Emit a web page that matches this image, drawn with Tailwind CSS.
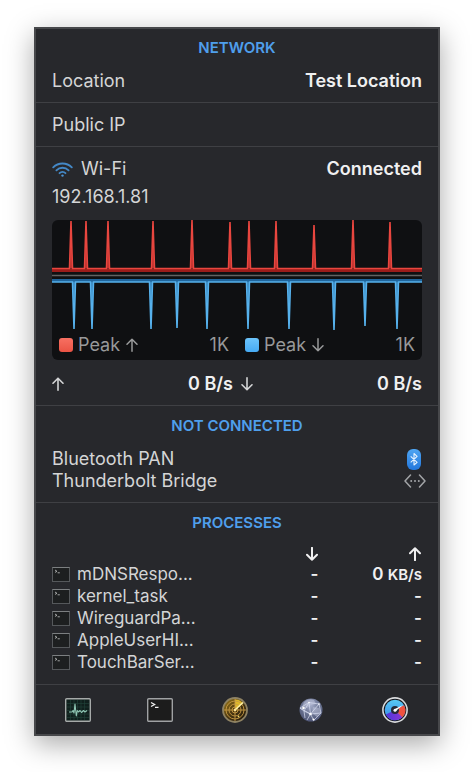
<!DOCTYPE html>
<html lang="en">
<head>
  <meta charset="UTF-8" />
  <meta name="viewport" content="width=device-width, initial-scale=1" />
  <title>Network</title>
  <script src="https://cdn.jsdelivr.net/npm/@tailwindcss/browser@4"></script>
</head>
<body class="bg-white pl-[34px] pr-[34px] pt-[27px] pb-9 font-['Inter',sans-serif] text-lg leading-[22px] text-[#d4d5d6]">

  <!-- Shared icons -->
  <svg class="hidden">
    <symbol id="up" viewBox="0 0 12 14"><path d="M6 13.2V1.2M1 6.2l5-5 5 5" fill="none" stroke="currentColor" stroke-linecap="round" stroke-linejoin="round" /></symbol>
    <symbol id="down" viewBox="0 0 12 14"><path d="M6 .8v12M1 7.8l5 5 5-5" fill="none" stroke="currentColor" stroke-linecap="round" stroke-linejoin="round" /></symbol>
    <symbol id="term" viewBox="0 0 18 15">
      <rect x=".5" y=".5" width="17" height="14" fill="#1d1f20" stroke="#55585b" />
      <path d="M.5 .5h17" stroke="#7c7f81" />
      <path d="M3 3l2 1.3L3 5.400M5.600 5.800h2.200" fill="none" stroke="#b4b6b6" stroke-width=".9" />
    </symbol>
  </svg>

  <main class="mx-auto max-w-xl border-2 border-[#47484b] bg-[#27282c] shadow-[0_8px_26px_rgba(0,0,0,0.34)]">

    <!-- Network -->
    <section class="border-b border-[#3f4044] px-4 pt-[9px] pb-2.5">
      <h2 class="text-center text-[15px] leading-5 font-semibold text-[#4f9fec]">NETWORK</h2>
      <div class="mt-3 flex justify-between">
        <span>Location</span>
        <span class="font-semibold text-[#f0f0f1]">Test Location</span>
      </div>
    </section>

    <section class="border-b border-[#3f4044] px-4 pt-[11px] pb-2.5">
      <p>Public IP</p>
    </section>

    <!-- Wi-Fi -->
    <section class="border-b border-[#3f4044] px-4 pt-[11px] pb-2.5">
      <div class="flex items-center justify-between">
        <span class="flex items-center gap-2">
          <svg class="h-[15px] w-[21px]" viewBox="0 0 21 15" fill="none" stroke="#4488c6" stroke-width="1.800" stroke-linecap="round">
            <path d="M1.200 5.400a13 13 0 0 1 18.600 0" />
            <path d="M4.400 8.300a8.600 8.600 0 0 1 12.200 0" />
            <path d="M7.500 11.200a4.200 4.200 0 0 1 6 0" />
            <circle cx="10.500" cy="13.600" r="1.200" fill="#4b93d4" stroke="none" />
          </svg>
          Wi-Fi
        </span>
        <span class="font-semibold text-[#f0f0f1]">Connected</span>
      </div>
      <p class="mt-1.5">192.168.1.81</p>

      <!-- Traffic graph -->
      <div class="mt-3 h-[140px] overflow-hidden rounded-md bg-[#0f1012] text-[#98999a]">
        <svg class="block h-[112px] w-full" viewBox="0 0 370 112" preserveAspectRatio="none" fill="none">
          <path d="M0 50.500H370" stroke="#9c1c1a" stroke-width="3" />
          <path d="M0 48.500H17.500L19 1L20.500 48.500H32.500L34 1L35.500 48.500H54.500L56 1L57.500 48.500H99.500L101 1L102.500 48.500H138.500L140 0L141.500 48.500H176.500L178 2L179.500 48.500H195.500L197 1L198.500 48.500H222.500L224 1L225.500 48.500H260.500L262 5L263.500 48.500H299.500L301 0L302.500 48.500H336.500L338 2L339.500 48.500H370" fill="#b02c2a" stroke="#e8463f" stroke-width="1.600" />
          <path d="M0 55.500H370" stroke="#626262" stroke-width="1.500" />
          <path d="M0 60.500H370" stroke="#20659c" stroke-width="3" />
          <path d="M0 62H20.500L22 109L23.500 62H38.500L40 109L41.500 62H97.500L99 109L100.500 62H123.500L125 108L126.500 62H153.500L155 109L156.500 62H194.500L196 109L197.500 62H235.500L237 109L238.500 62H280.500L282 110L283.500 62H311.500L313 106L314.500 62H343.500L345 109L346.500 62H370" fill="#337fb4" stroke="#56b1ec" stroke-width="1.600" />
        </svg>
        <div class="grid grid-cols-2 gap-4 px-[7px] pt-0.5">
          <div class="flex items-center">
            <span class="size-3.5 rounded-[3px] bg-linear-to-b from-[#f77062] to-[#ea5344]"></span>
            <span class="ml-[5px]">Peak</span>
            <svg class="ml-1.5 h-3.5 w-3 stroke-[1.5]"><use href="#up" /></svg>
            <span class="ml-auto">1K</span>
          </div>
          <div class="flex items-center">
            <span class="size-3.5 rounded-[3px] bg-linear-to-b from-[#6cc4fb] to-[#46aaf3]"></span>
            <span class="ml-[5px]">Peak</span>
            <svg class="ml-1.5 h-3.5 w-3 stroke-[1.5]"><use href="#down" /></svg>
            <span class="ml-auto">1K</span>
          </div>
        </div>
      </div>

      <div class="mt-[13px] grid grid-cols-2 gap-2">
        <div class="flex items-center justify-between">
          <svg class="h-3.5 w-3 stroke-[1.6]"><use href="#up" /></svg>
          <span class="font-semibold text-[#f0f0f1]">0 B/s</span>
        </div>
        <div class="flex items-center justify-between">
          <svg class="h-3.5 w-3 stroke-[1.6]"><use href="#down" /></svg>
          <span class="font-semibold text-[#f0f0f1]">0 B/s</span>
        </div>
      </div>
    </section>

    <!-- Not connected -->
    <section class="border-b border-[#3f4044] px-4 py-2.5">
      <h2 class="text-center text-[15px] leading-5 font-semibold text-[#4f9fec]">NOT CONNECTED</h2>
      <div class="mt-3 flex items-center justify-between">
        <span>Bluetooth PAN</span>
        <svg class="mr-px h-[21px] w-3.5" viewBox="0 0 14 21">
          <defs><linearGradient id="bt" x2="0" y2="1"><stop stop-color="#4fa5f2" /><stop offset="1" stop-color="#2277dc" /></linearGradient></defs>
          <rect width="14" height="21" rx="6" fill="url(#bt)" />
          <path d="M3.700 7.300l6.400 6L7 16V4.500l3.100 2.900-6.400 6" fill="none" stroke="#e6f2ff" stroke-width="1.100" stroke-linejoin="round" />
        </svg>
      </div>
      <div class="flex items-center justify-between">
        <span>Thunderbolt Bridge</span>
        <svg class="-mr-1 h-3.5 w-[22px]" viewBox="0 0 22 14" fill="none" stroke="#a2a4a7" stroke-width="1.500" stroke-linecap="round" stroke-linejoin="round">
          <path d="M6.500 1L1 7l5.500 6M15.500 1L21 7l-5.500 6" />
          <path d="M7.200 7h.01M11 7h.01M14.800 7h.01" stroke-width="2" />
        </svg>
      </div>
    </section>

    <!-- Processes -->
    <section class="border-b border-[#3f4044] px-4 pt-2.5 pb-[11px]">
      <h2 class="text-center text-[15px] leading-5 font-semibold text-[#4f9fec]">PROCESSES</h2>
      <table class="mt-3 w-full table-fixed text-right text-[17px] leading-[22px]">
        <colgroup>
          <col />
          <col class="w-[28%]" />
          <col class="w-[28%]" />
        </colgroup>
        <thead class="text-[#f0f0f1]">
          <tr class="h-[18px] leading-none">
            <th aria-label="Process"></th>
            <th aria-label="Download" class="p-0"><svg class="ml-auto h-3.5 w-3 stroke-2"><use href="#down" /></svg></th>
            <th aria-label="Upload" class="p-0"><svg class="mr-px ml-auto h-3.5 w-3 stroke-2"><use href="#up" /></svg></th>
          </tr>
        </thead>
        <tbody class="font-semibold text-[#f0f0f1]">
          <tr>
            <td class="flex items-center gap-[7px] font-normal text-[#d4d5d6]"><svg class="h-[15px] w-[18px]"><use href="#term" /></svg>mDNSRespo...</td>
            <td>-</td>
            <td>0 <span class="text-[15px] leading-none">KB/s</span></td>
          </tr>
          <tr>
            <td class="flex items-center gap-[7px] font-normal text-[#d4d5d6]"><svg class="h-[15px] w-[18px]"><use href="#term" /></svg>kernel_task</td>
            <td>-</td>
            <td>-</td>
          </tr>
          <tr>
            <td class="flex items-center gap-[7px] font-normal text-[#d4d5d6]"><svg class="h-[15px] w-[18px]"><use href="#term" /></svg>WireguardPa...</td>
            <td>-</td>
            <td>-</td>
          </tr>
          <tr>
            <td class="flex items-center gap-[7px] font-normal text-[#d4d5d6]"><svg class="h-[15px] w-[18px]"><use href="#term" /></svg>AppleUserHI...</td>
            <td>-</td>
            <td>-</td>
          </tr>
          <tr>
            <td class="flex items-center gap-[7px] font-normal text-[#d4d5d6]"><svg class="h-[15px] w-[18px]"><use href="#term" /></svg>TouchBarSer...</td>
            <td>-</td>
            <td>-</td>
          </tr>
        </tbody>
      </table>
    </section>

    <!-- App shortcuts -->
    <footer class="grid h-[49px] grid-cols-[84fr_80fr_70fr_82fr_86fr] place-items-center">
      <button aria-label="Activity Monitor">
        <svg class="block h-6 w-[26px]" viewBox="0 0 26 24">
          <rect x=".7" y=".7" width="24.600" height="22.600" rx="1" fill="#10201d" stroke="#a6aaa9" stroke-width="1.400" />
          <path d="M2 5.500h22M2 9h22M2 12.500h22M2 16h22M2 19.500h22M5.500 2v20M9 2v20M12.500 2v20M16 2v20M19.500 2v20" stroke="#21433a" stroke-width=".6" />
          <path d="M4 14h3l1-1.500 1 2.500 1-9 1.300 12 1-5.500 1.200 1.500 1.500-1.500 1.500 2 2-2 1.500 1.500L22 12.500" fill="none" stroke="#8fc7b4" stroke-width="1.100" stroke-linejoin="round" />
        </svg>
      </button>
      <button aria-label="Terminal">
        <svg class="block h-6 w-[26px]" viewBox="0 0 26 24">
          <rect x=".7" y=".7" width="24.600" height="22.600" rx="1" fill="#1c1c1c" stroke="#a0a2a4" stroke-width="1.400" />
          <path d="M4 4.500l3.600 2L4 8.500M8 9.300h3.500" fill="none" stroke="#f2f2f2" stroke-width="1.300" />
        </svg>
      </button>
      <button aria-label="Network Radar">
        <svg class="block size-[26px]" viewBox="0 0 26 26">
          <defs><linearGradient id="radar" x1="0" y1="0" x2="1" y2="1"><stop stop-color="#a58119" /><stop offset=".5" stop-color="#4b3711" /><stop offset="1" stop-color="#17120a" /></linearGradient></defs>
          <circle cx="13" cy="13" r="12" fill="url(#radar)" stroke="#8e8263" stroke-width="1.800" />
          <path d="M13 13V2.500a10.500 10.500 0 0 1 7.800 3.400z" fill="#dfb928" />
          <g fill="none" stroke="#c79b45" stroke-width=".9">
            <circle cx="13" cy="13" r="3" /><circle cx="13" cy="13" r="6" /><circle cx="13" cy="13" r="9" />
            <path d="M13 2v22M2 13h22" />
          </g>
          <path d="M13 13l8-7.500" stroke="#fff3a8" stroke-width="1.600" />
          <circle cx="13" cy="13" r="1.200" fill="#ffe89a" />
          <circle cx="16.500" cy="19.500" r=".9" fill="#f3d567" />
        </svg>
      </button>
      <button aria-label="Network Utility">
        <svg class="block size-6" viewBox="0 0 24 24">
          <defs><radialGradient id="globe" cx=".5" cy=".3" r=".75"><stop stop-color="#a4acc9" /><stop offset=".55" stop-color="#68718f" /><stop offset="1" stop-color="#4b5273" /></radialGradient></defs>
          <circle cx="12" cy="12" r="11.500" fill="url(#globe)" />
          <path d="M5 4q4-4 10-2l2 4-5 1-4 3-5-1zM14 9l6 1 2 4-4 5-5-4z" fill="#c7cce2" opacity=".45" />
          <path d="M1 10L10 4.500 20 6M1 10l10.500 6L22 15M10 4.500l1.500 11.500L8 22M10 4.500L5 13M11.500 16L20 6M5 13l6.500 3 3.500 7M1 10l4 3 1 7M20 6l2 9-7 7" fill="none" stroke="#d9def2" stroke-width=".7" />
          <g fill="#fff"><circle cx="4.500" cy="10" r="1.300" /><circle cx="11.500" cy="16" r="1.300" /><circle cx="10" cy="4.500" r=".8" /><circle cx="20" cy="6" r=".8" /><circle cx="14.500" cy="21.500" r="1" /></g>
        </svg>
      </button>
      <button aria-label="iStat Menus">
        <svg class="block size-[26px]" viewBox="0 0 26 26">
          <defs>
            <linearGradient id="gaugeBlue" x2="0" y2="1"><stop stop-color="#58c9f5" /><stop offset="1" stop-color="#3487e8" /></linearGradient>
            <linearGradient id="gaugePurple"><stop stop-color="#4b38dc" /><stop offset="1" stop-color="#8a35d4" /></linearGradient>
          </defs>
          <circle cx="13" cy="13" r="12.100" fill="#15161c" stroke="#d8dadc" stroke-width="1.600" />
          <circle cx="13" cy="13" r="10.300" fill="url(#gaugeBlue)" />
          <path d="M13 13L3.800 17.600A10.300 10.300 0 0 0 20.300 20.300z" fill="url(#gaugePurple)" />
          <path d="M13 13l7.300 7.300A10.300 10.300 0 0 0 22 8.200z" fill="#f0523f" />
          <circle cx="13" cy="13" r="4" fill="#252a3a" />
          <path d="M12.300 12.200L21 8l-7.500 6.300z" fill="#fff" />
          <circle cx="13" cy="13.200" r="1.500" fill="#fff" />
        </svg>
      </button>
    </footer>
  </main>

</body>
</html>
